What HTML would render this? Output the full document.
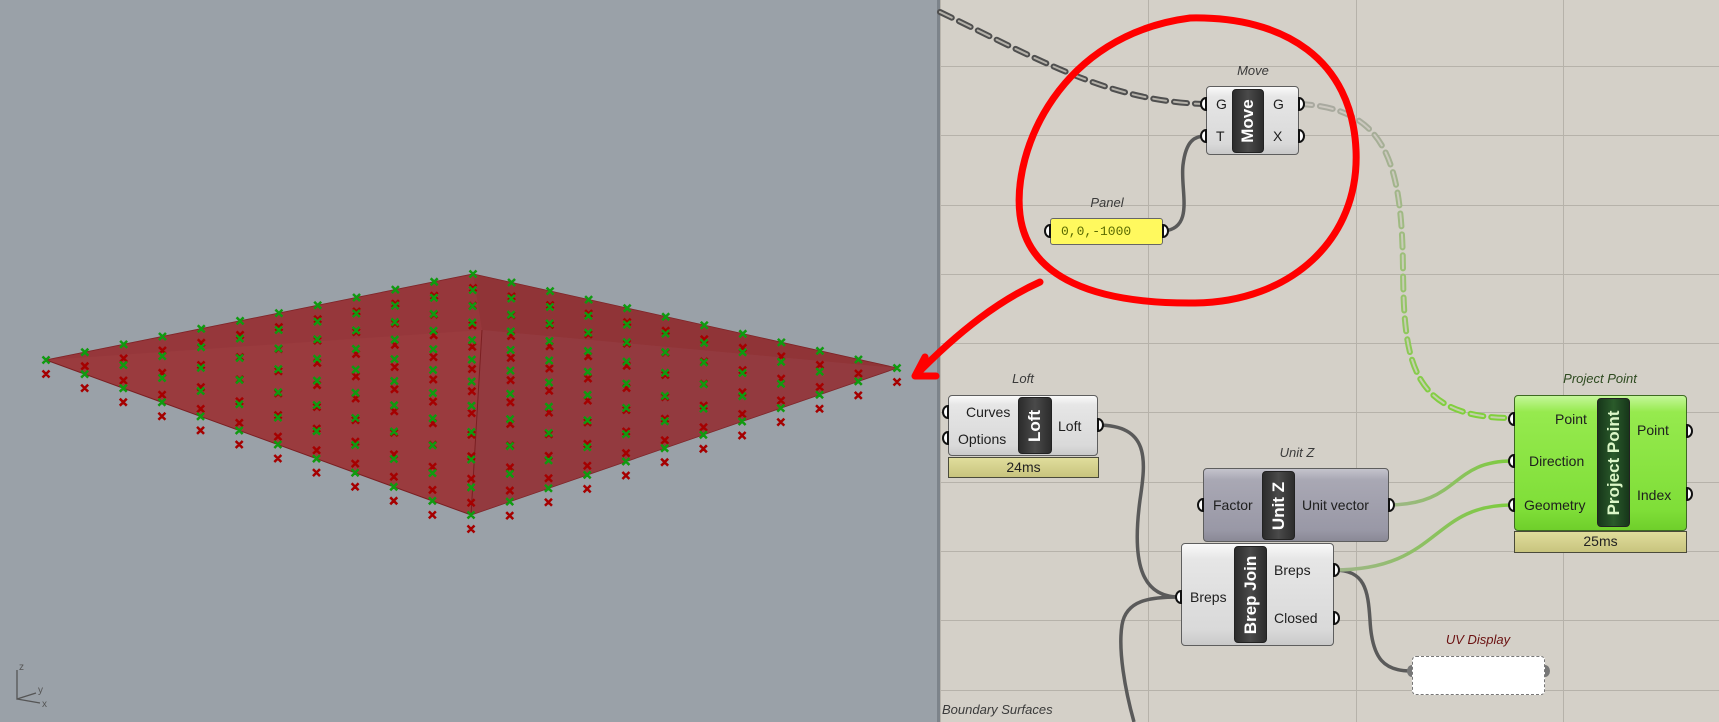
<!DOCTYPE html>
<html><head><meta charset="utf-8"><style>
html,body{margin:0;padding:0;width:1719px;height:722px;overflow:hidden;background:#d4d0c8;font-family:"Liberation Sans",sans-serif}
#vp{position:absolute;left:0;top:0;width:937px;height:722px;background:#9aa1a8}
#div{position:absolute;left:937px;top:0;width:3px;height:722px;background:#7d848b;border-right:1px solid #b8b4ac}
.n{position:absolute;box-sizing:border-box;border:1px solid #5e5e5e;border-radius:4px;background:linear-gradient(#fafafa,#e6e6e6 15%,#d9d9d9 85%,#c9c9c9)}
.bar{position:absolute;box-sizing:border-box;border:1px solid #222;border-radius:4px;background:linear-gradient(90deg,#2c2c2c,#4a4a4a 50%,#2c2c2c)}
.bar span{position:absolute;left:50%;top:50%;transform:translate(-50%,-50%) rotate(-90deg);color:#fff;font-weight:bold;font-size:17px;white-space:nowrap}
.t{position:absolute;font-size:14px;color:#1e1e1e;line-height:16px;white-space:nowrap}
.lab{position:absolute;font-size:13px;font-style:italic;color:#3a3a3a;white-space:nowrap;transform:translateX(-50%)}
.tm{position:absolute;box-sizing:border-box;border:1px solid #4a4a3a;background:linear-gradient(#e0dd9c,#c8c47e);text-align:center;font-size:14px;color:#222;line-height:19px}
</style></head><body>
<div id="vp"></div>
<div id="div"></div>
<svg id="s" width="1719" height="722" style="position:absolute;left:0;top:0">
<g stroke="#b6b2aa" stroke-width="1">
<line x1="941" y1="66.5" x2="1719" y2="66.5"/><line x1="941" y1="135.5" x2="1719" y2="135.5"/><line x1="941" y1="205.5" x2="1719" y2="205.5"/><line x1="941" y1="274.5" x2="1719" y2="274.5"/><line x1="941" y1="343.5" x2="1719" y2="343.5"/><line x1="941" y1="412.5" x2="1719" y2="412.5"/><line x1="941" y1="482.5" x2="1719" y2="482.5"/><line x1="941" y1="551.5" x2="1719" y2="551.5"/><line x1="941" y1="620.5" x2="1719" y2="620.5"/><line x1="941" y1="690.5" x2="1719" y2="690.5"/>
<line x1="1148.5" y1="0" x2="1148.5" y2="722"/><line x1="1356.5" y1="0" x2="1356.5" y2="722"/><line x1="1563.5" y1="0" x2="1563.5" y2="722"/>
</g>
<g stroke="#555" stroke-width="1.3" fill="none"><path d="M17 670 L17 699 L36 693 M17 699 L40 703"/></g>
<g font-size="10" fill="#555" font-family="Liberation Sans"><text x="19" y="670">z</text><text x="38" y="693">y</text><text x="42" y="707">x</text></g>
<polygon points="46,360 473,274 897,368 471,515" fill="#9a3b3e" stroke="#7a1f22" stroke-width="1"/>
<polygon points="473,274 897,368 482,330" fill="#8d3336" opacity="0.8"/>
<polygon points="46,360 473,274 482,330" fill="#94363a" opacity="0.6"/>
<polygon points="482,330 897,368 471,515" fill="#903b40" opacity="0.7"/>
<line x1="482" y1="330" x2="471" y2="515" stroke="#7a1f22" stroke-width="1"/>
<g id="pts"></g>
<path d="M940 12 C1040 60,1110 102,1206 104" fill="none" stroke="#4f4f4f" stroke-width="6" stroke-dasharray="13 8" stroke-linecap="round"/>
<path d="M940 12 C1040 60,1110 102,1206 104" fill="none" stroke="#b5b2aa" stroke-width="2" stroke-dasharray="13 8" stroke-linecap="round"/>
<defs><linearGradient id="gg" x1="0" y1="0" x2="0" y2="1"><stop offset="0" stop-color="#a9a9a0"/><stop offset="0.5" stop-color="#9cc078"/><stop offset="1" stop-color="#7fd03a"/></linearGradient>
<linearGradient id="gw" x1="0" y1="0" x2="1" y2="0"><stop offset="0" stop-color="#9fb58a"/><stop offset="1" stop-color="#7ccc3c"/></linearGradient></defs>
<path d="M1299 104 C1385 108,1402 160,1403 270 C1404 360,1410 418,1512 418" fill="none" stroke="url(#gg)" stroke-width="6" stroke-dasharray="13 8" stroke-linecap="round"/>
<path d="M1299 104 C1385 108,1402 160,1403 270 C1404 360,1410 418,1512 418" fill="none" stroke="#d4d0c8" stroke-width="2" stroke-dasharray="13 8" stroke-linecap="round" opacity="0.8"/>
<g fill="none" stroke-width="3.5">
<path d="M1164 231 C1195 228,1180 190,1183 165 C1186 140,1195 136,1206 136" stroke="#5a5a5a"/>
<path d="M1097 425 C1150 425,1146 460,1140 500 C1132 560,1140 597,1179 597" stroke="#5a5a5a"/>
<path d="M1134 722 C1125 690,1118 650,1122 625 C1126 600,1150 597,1179 597" stroke="#5a5a5a"/>
<path d="M1334 570 C1365 570,1368 590,1370 620 C1372 660,1385 671,1411 671" stroke="#5a5a5a"/>
<path d="M1388 505 C1460 505,1450 461,1512 461" stroke="url(#gw)"/>
<path d="M1334 570 C1440 570,1430 505,1512 505" stroke="url(#gw)"/>
</g>
<g fill="none" stroke="#ff0000" stroke-width="7" stroke-linecap="round">
<path d="M1190 18 C1285 16,1352 60,1356 150 C1360 240,1290 302,1195 303 C1095 304,1028 278,1020 215 C1012 150,1060 35,1190 18"/>
<path d="M1040 282 C1000 300,960 330,915 376 M915 376 L925 357 M915 376 L936 376"/>
</g>
</svg>

<div class="lab" style="left:1253px;top:63px">Move</div>
<div class="n" style="left:1206px;top:86px;width:93px;height:69px"></div>
<div class="bar" style="left:1232px;top:89px;width:32px;height:64px"><span>Move</span></div>
<div class="t" style="left:1216px;top:96px">G</div><div class="t" style="left:1216px;top:128px">T</div>
<div class="t" style="left:1273px;top:96px">G</div><div class="t" style="left:1273px;top:128px">X</div>

<div class="lab" style="left:1107px;top:195px">Panel</div>
<div style="position:absolute;left:1050px;top:218px;width:113px;height:27px;box-sizing:border-box;border:1px solid #666;border-radius:3px;background:#fff95e;font-family:'Liberation Mono',monospace;font-size:13px;color:#5a6a00;line-height:25px;padding-left:10px">0,0,-1000</div>

<div class="lab" style="left:1023px;top:371px">Loft</div>
<div class="n" style="left:948px;top:395px;width:150px;height:61px"></div>
<div class="bar" style="left:1018px;top:397px;width:34px;height:57px"><span>Loft</span></div>
<div class="t" style="left:966px;top:404px">Curves</div><div class="t" style="left:958px;top:431px">Options</div>
<div class="t" style="left:1058px;top:418px">Loft</div>
<div class="tm" style="left:948px;top:457px;width:151px;height:21px">24ms</div>

<div class="lab" style="left:1297px;top:445px">Unit Z</div>
<div class="n" style="left:1203px;top:468px;width:186px;height:74px;background:linear-gradient(#c4c3cc,#a9a8b4 15%,#9998a6 85%,#8a8996)"></div>
<div class="bar" style="left:1262px;top:471px;width:33px;height:69px"><span>Unit Z</span></div>
<div class="t" style="left:1213px;top:497px">Factor</div><div class="t" style="left:1302px;top:497px">Unit vector</div>

<div class="n" style="left:1181px;top:543px;width:153px;height:103px"></div>
<div class="bar" style="left:1234px;top:546px;width:33px;height:97px"><span>Brep Join</span></div>
<div class="t" style="left:1190px;top:589px">Breps</div>
<div class="t" style="left:1274px;top:562px">Breps</div><div class="t" style="left:1274px;top:610px">Closed</div>

<div class="lab" style="left:1600px;top:371px;color:#2e4a20">Project Point</div>
<div class="n" style="left:1514px;top:395px;width:173px;height:136px;border-color:#3d6a22;background:linear-gradient(#c4f79a,#96ea4e 12%,#7fde38 85%,#6fcf2b)"></div>
<div class="bar" style="left:1597px;top:398px;width:33px;height:129px;background:linear-gradient(90deg,#17371a,#2a5a2a 50%,#17371a)"><span style="color:#dcf7c8">Project Point</span></div>
<div class="t" style="left:1555px;top:411px">Point</div><div class="t" style="left:1529px;top:453px">Direction</div><div class="t" style="left:1524px;top:497px">Geometry</div>
<div class="t" style="left:1637px;top:422px">Point</div><div class="t" style="left:1637px;top:487px">Index</div>
<div class="tm" style="left:1514px;top:531px;width:173px;height:22px">25ms</div>

<div class="lab" style="left:1478px;top:632px;color:#6a1010">UV Display</div>
<div style="position:absolute;left:1412px;top:656px;width:133px;height:39px;box-sizing:border-box;border:1.5px dashed #777;border-radius:4px;background:#fff"></div>

<div style="position:absolute;left:942px;top:702px;font-size:13px;font-style:italic;color:#3a3a3a">Boundary Surfaces</div>

<svg width="1719" height="722" style="position:absolute;left:0;top:0;pointer-events:none">
<g fill="#fff" stroke="#111" stroke-width="2">
<path d="M1206 98 a5 6 0 0 0 0 12Z"/><path d="M1206 130 a5 6 0 0 0 0 12Z"/>
<path d="M1299 98 a5 6 0 0 1 0 12Z"/><path d="M1299 130 a5 6 0 0 1 0 12Z"/>
<path d="M1050 225 a5 6 0 0 0 0 12Z"/><path d="M1163 225 a5 6 0 0 1 0 12Z"/>
<path d="M948 406 a5 6 0 0 0 0 12Z"/><path d="M948 432 a5 6 0 0 0 0 12Z"/><path d="M1098 419 a5 6 0 0 1 0 12Z"/>
<path d="M1203 499 a5 6 0 0 0 0 12Z"/><path d="M1389 499 a5 6 0 0 1 0 12Z"/>
<path d="M1181 591 a5 6 0 0 0 0 12Z"/><path d="M1334 564 a5 6 0 0 1 0 12Z"/><path d="M1334 612 a5 6 0 0 1 0 12Z"/>
<path d="M1514 413 a5 6 0 0 0 0 12Z"/><path d="M1514 455 a5 6 0 0 0 0 12Z"/><path d="M1514 499 a5 6 0 0 0 0 12Z"/>
<path d="M1687 425 a5 6 0 0 1 0 12Z"/><path d="M1687 488 a5 6 0 0 1 0 12Z"/>
</g>
<path d="M1412 665 a5 6 0 0 0 0 12Z" fill="#777"/><path d="M1545 665 a5 6 0 0 1 0 12Z" fill="#777"/>
</svg>
<script>
(function(){
var L=[46,360],T=[473,274],R=[897,368],B=[471,515],n=11,r='',g='';
function P(u,v){return[(1-u)*(1-v)*L[0]+u*(1-v)*B[0]+u*v*R[0]+(1-u)*v*T[0],(1-u)*(1-v)*L[1]+u*(1-v)*B[1]+u*v*R[1]+(1-u)*v*T[1]];}
function X(x,y){var s=3.5;return 'M'+(x-s)+' '+(y-s)+'L'+(x+s)+' '+(y+s)+'M'+(x+s)+' '+(y-s)+'L'+(x-s)+' '+(y+s);}
for(var i=0;i<=n;i++)for(var j=0;j<=n;j++){var u=i/n,v=j/n,p=P(u,v),z=30*Math.sin(Math.PI*u)*Math.sin(Math.PI*v);
g+=X(p[0],p[1]-z*0.3);r+=X(p[0],p[1]+14+z*0.3);}
document.getElementById('pts').innerHTML='<path d="'+r+'" stroke="#a50000" stroke-width="2.5" fill="none"/><path d="'+g+'" stroke="#109a10" stroke-width="2.5" fill="none"/>';
})();
</script>
</body></html>
